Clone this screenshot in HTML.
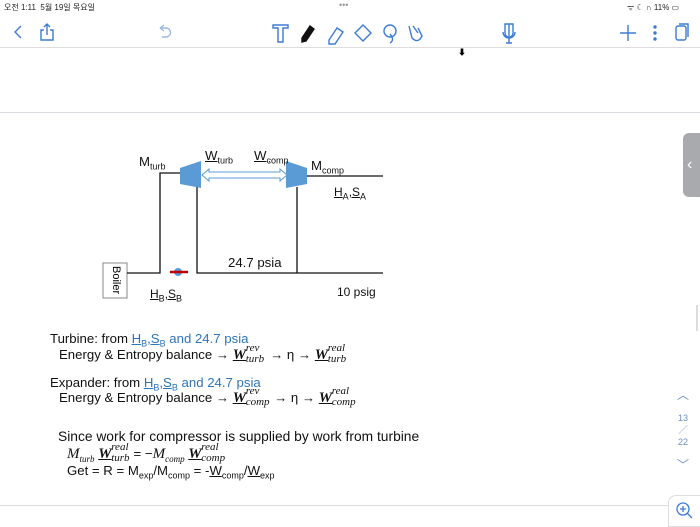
<!DOCTYPE html>
<html><head><meta charset="utf-8"><style>
body{margin:0;width:700px;height:525px;overflow:hidden;background:#fff;font-family:"Liberation Sans","Noto Sans CJK KR",sans-serif;position:relative}
.a{position:absolute;white-space:nowrap}
.bl{color:#2e75b6}
i.m{font-family:"Liberation Serif",serif;font-style:italic;font-size:15px}
.u{text-decoration:underline}
sub{font-size:9px}
.t{font-size:13.2px;color:#111}
.w{display:inline-block;position:relative;font-family:"Liberation Serif",serif;font-style:italic;font-weight:bold;font-size:15px;text-decoration:underline;padding-right:24px}
.w .s{position:absolute;left:13px;top:-5px;font-size:11px;font-weight:normal}
.w .b{position:absolute;left:13px;top:6px;font-size:11px;font-weight:normal}
</style></head><body>
<div class="a" style="left:4px;top:2px;font-size:8px;color:#222">오전 1:11 &nbsp;5월 19일 목요일</div>
<div class="a" style="left:339px;top:0px;font-size:9px;color:#999">•••</div>
<div class="a" style="left:627px;top:2px;font-size:8px;color:#222">ᯤ ☾ ∩ 11% ▭</div>
<div class="a" style="left:0;top:47px;width:700px;height:1px;background:#ddd"></div>
<svg class="a" style="left:0;top:18px" width="700" height="30" fill="none" stroke="#3d7bd6" stroke-width="1.4">
<path d="M21 8 L15 14 L21 20"/>
<path d="M44 12 H41 V22 H53 V12 H50 M47 17 V6 M44 9 L47 6 L50 9"/>
<path d="M160 10 L164 7 M160 10 L164 13 M160 10 H166 A4 4 0 0 1 166 19 H162" stroke="#9ab8e6"/>
<path d="M273 7 H288 V10 H283 V24 H278 V10 H273 Z"/>
<path d="M302 20 L310 8 L314 11 L306 23 L302 24 Z" fill="#111" stroke="#111"/>
<path d="M329 22 L337 10 L343 14 L335 26 L329 26 Z"/>
<path d="M355 15 L363 7 L371 15 L363 23 Z"/>
<circle cx="390" cy="13" r="6"/><path d="M390 16 Q395 22 390 25"/>
<path d="M409 8 L412 20 Q418 26 422 18 L418 10 M413 8 L418 15"/>
<path d="M509 6 V18 M505 6 h8 v9 a4 4 0 0 1 -8 0 z M503 14 a6 6 0 0 0 12 0 M509 20 V25 M506 25 h6"/>
<path d="M628 7 V23 M620 15 H636"/>
<circle cx="655" cy="9" r="1" fill="#3d7bd6"/><circle cx="655" cy="15" r="1" fill="#3d7bd6"/><circle cx="655" cy="21" r="1" fill="#3d7bd6"/>
<rect x="676" y="8" width="10" height="14" rx="2"/><path d="M679 6 H688 V19"/>
</svg>
<div class="a" style="left:458px;top:47px;font-size:8px">⬇</div>
<div class="a" style="left:0;top:112px;width:700px;height:1px;background:#d8dbe0"></div>
<div class="a" style="left:683px;top:133px;width:17px;height:64px;background:#a9aaad;border-radius:6px 0 0 6px;color:#fff;font-size:16px;line-height:64px;text-indent:4px">‹</div>
<div class="a" style="left:696px;top:305px;width:2px;height:26px;background:#ddd"></div>
<svg class="a" style="left:0;top:0" width="700" height="525">
<rect x="103" y="263" width="24" height="35" fill="#fff" stroke="#888"/>
<g stroke="#111" stroke-width="1.3" fill="none">
<path d="M127 273 H160 V173 H180"/>
<path d="M197 186 V273 H383"/>
<path d="M297 187 V273"/>
<path d="M383 176 H307"/>
</g>
<path d="M180 168 L201 161 L201 188 L180 184 Z" fill="#5b9bd5"/>
<path d="M286 161 L307 168 L307 184 L286 188 Z" fill="#5b9bd5"/>
<path d="M202 175 L209 169 V172 H280 V169 L287 175 L280 181 V178 H209 V181 Z" fill="#fff" stroke="#5b9bd5"/>
<circle cx="178" cy="272" r="4" fill="#5b9bd5"/>
<path d="M170 272 H188" stroke="#c00000" stroke-width="2.5"/>
</svg>
<div class="a" style="left:108px;top:266px;font-size:11px;transform:rotate(90deg);transform-origin:7px 7px">Boiler</div>
<div class="a t" style="left:139px;top:154px">M<sub>turb</sub></div>
<div class="a t u" style="left:205px;top:148px">W<sub>turb</sub></div>
<div class="a t u" style="left:254px;top:148px">W<sub>comp</sub></div>
<div class="a t" style="left:311px;top:158px">M<sub>comp</sub></div>
<div class="a t bl u" style="left:334px;top:185px;font-size:12px">H<sub>A</sub>,S<sub>A</sub></div>
<div class="a t bl" style="left:228px;top:255px">24.7 psia</div>
<div class="a t" style="left:337px;top:285px;font-size:12px">10 psig</div>
<div class="a t bl u" style="left:150px;top:287px;font-size:12px">H<sub>B</sub>,S<sub>B</sub></div>
<div class="a t" style="left:50px;top:331px">Turbine: from <span class="bl"><u>H<sub>B</sub>,S<sub>B</sub></u> and 24.7 psia</span></div>
<div class="a t" style="left:59px;top:347px">Energy &amp; Entropy balance → <span class="w">W<span class="s">rev</span><span class="b">turb</span></span>→ η → <span class="w">W<span class="s">real</span><span class="b">turb</span></span></div>
<div class="a t" style="left:50px;top:375px">Expander: from <span class="bl"><u>H<sub>B</sub>,S<sub>B</sub></u> and 24.7 psia</span></div>
<div class="a t" style="left:59px;top:390px">Energy &amp; Entropy balance → <span class="w" style="padding-right:28px">W<span class="s">rev</span><span class="b">comp</span></span>→ η → <span class="w" style="padding-right:28px">W<span class="s">real</span><span class="b">comp</span></span></div>
<div class="a t" style="left:58px;top:429px;font-size:13.8px">Since work for compressor is supplied by work from turbine</div>
<div class="a t" style="left:67px;top:446px"><i class="m">M<sub>turb</sub></i> <span class="w" style="padding-right:22px">W<span class="s">real</span><span class="b">turb</span></span>= −<i class="m">M<sub>comp</sub></i> <span class="w">W<span class="s">real</span><span class="b">comp</span></span></div>
<div class="a t" style="left:67px;top:463px">Get = R = M<sub>exp</sub>/M<sub>comp</sub> = -<u>W</u><sub>comp</sub>/<u>W</u><sub>exp</sub></div>
<div class="a" style="left:677px;top:386px;font-size:12px;color:#6b8fc4">︿</div>
<div class="a" style="left:678px;top:412px;font-size:9px;color:#6b8fc4;text-align:center;line-height:12px">13<br>╱<br>22</div>
<div class="a" style="left:677px;top:456px;font-size:12px;color:#6b8fc4">﹀</div>
<div class="a" style="left:0;top:505px;width:668px;height:1px;background:#ddd"></div>
<div class="a" style="left:668px;top:495px;width:32px;height:30px;border:1px solid #ddd;border-radius:8px 0 0 0;background:#fff"></div>
<svg class="a" style="left:675px;top:501px" width="20" height="20" fill="none" stroke="#3d7bd6" stroke-width="1.3"><circle cx="8" cy="8" r="6"/><path d="M5 8h6M8 5v6M12.5 12.5L17 17"/></svg>
</body></html>
